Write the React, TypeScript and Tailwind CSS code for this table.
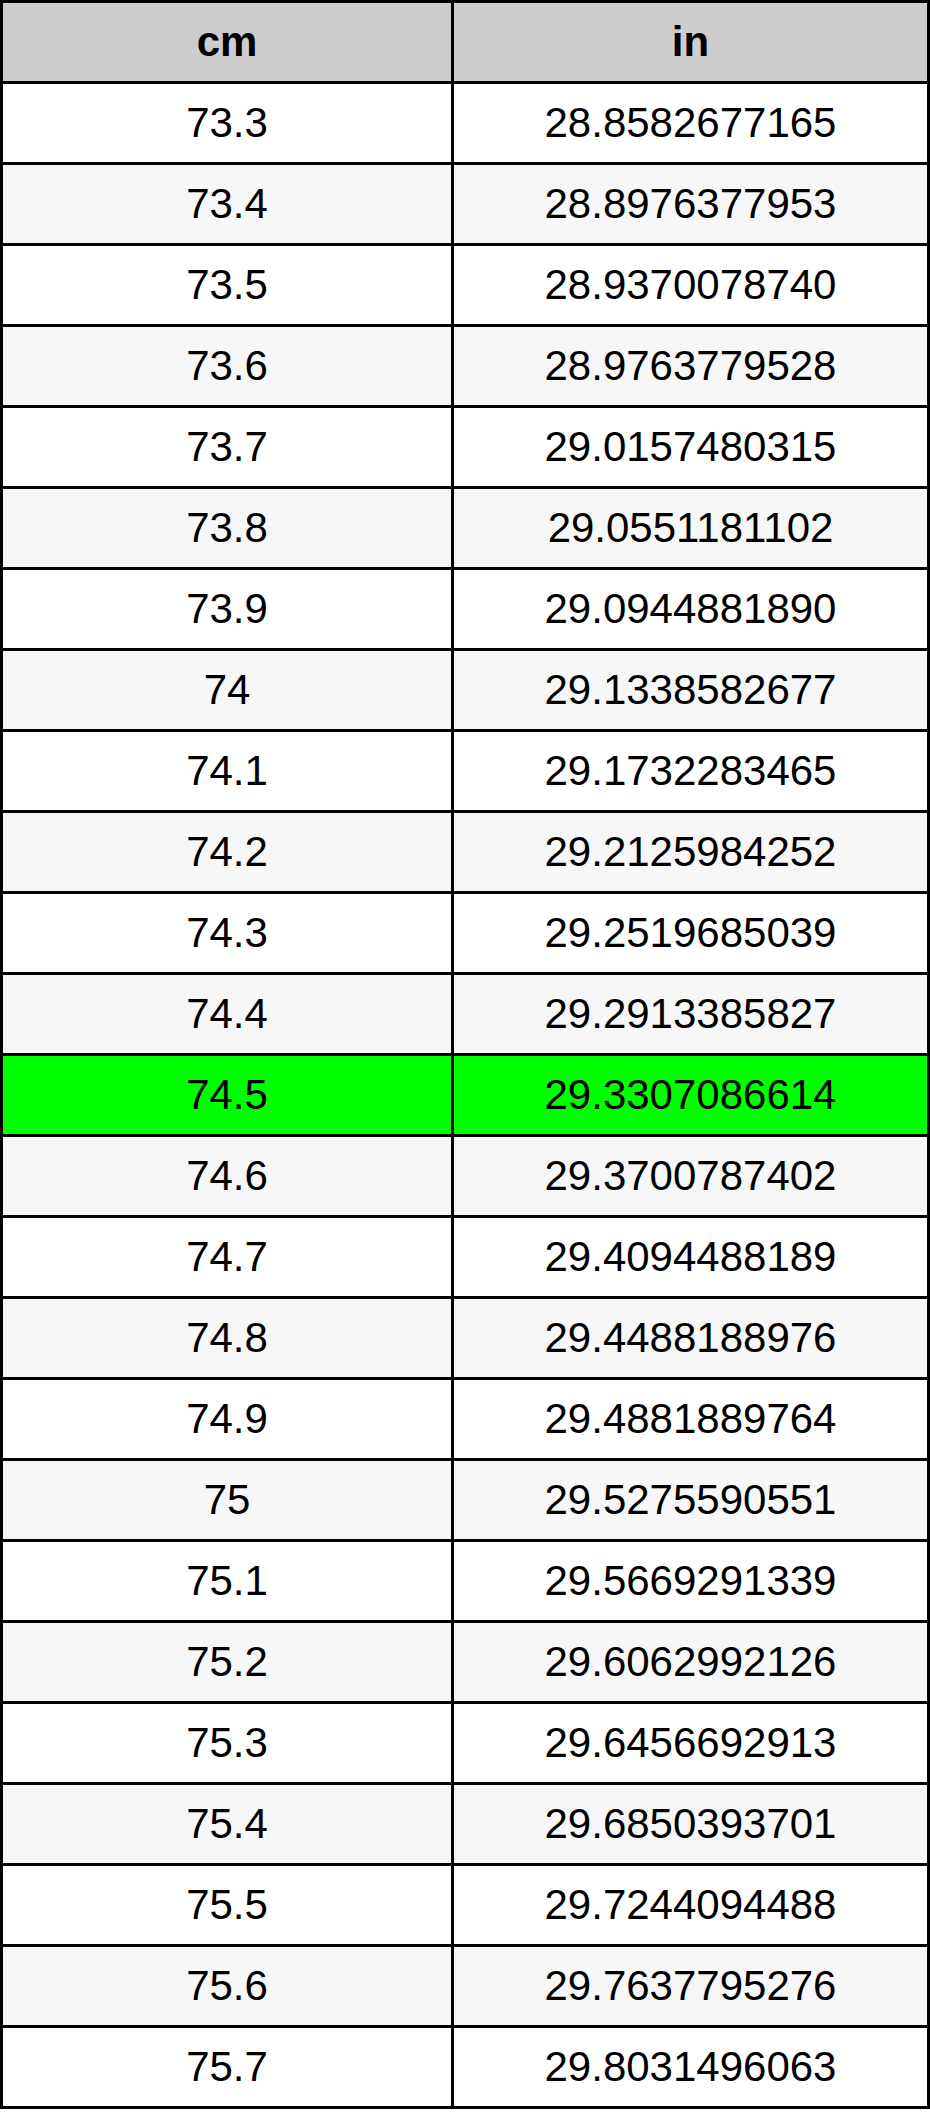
const rows: [string, string][] = [
  ["73.3", "28.8582677165"],
  ["73.4", "28.8976377953"],
  ["73.5", "28.9370078740"],
  ["73.6", "28.9763779528"],
  ["73.7", "29.0157480315"],
  ["73.8", "29.0551181102"],
  ["73.9", "29.0944881890"],
  ["74", "29.1338582677"],
  ["74.1", "29.1732283465"],
  ["74.2", "29.2125984252"],
  ["74.3", "29.2519685039"],
  ["74.4", "29.2913385827"],
  ["74.5", "29.3307086614"],
  ["74.6", "29.3700787402"],
  ["74.7", "29.4094488189"],
  ["74.8", "29.4488188976"],
  ["74.9", "29.4881889764"],
  ["75", "29.5275590551"],
  ["75.1", "29.5669291339"],
  ["75.2", "29.6062992126"],
  ["75.3", "29.6456692913"],
  ["75.4", "29.6850393701"],
  ["75.5", "29.7244094488"],
  ["75.6", "29.7637795276"],
  ["75.7", "29.8031496063"],
]

const highlighted = "74.5"

export default function App() {
  return (
    <div className="bg-white min-h-[2115px] font-['Liberation_Sans',Arial,sans-serif] text-black">
      <div className="grid w-[930px] grid-cols-[448px_473px] gap-[3px] bg-black p-[3px] text-[42px] leading-none">
        <div className="flex h-[78px] items-center justify-center bg-[#cdcdcd] font-bold">cm</div>
        <div className="flex h-[78px] items-center justify-center bg-[#cdcdcd] font-bold">in</div>
        {rows.map(([cm, inch], i) => {
          const bg = cm === highlighted ? "bg-[#00ff00]" : i % 2 === 0 ? "bg-white" : "bg-[#f7f7f7]"
          return (
            <div key={cm} className="contents">
              <div className={`flex h-[78px] items-center justify-center ${bg}`}>{cm}</div>
              <div className={`flex h-[78px] items-center justify-center ${bg}`}>{inch}</div>
            </div>
          )
        })}
      </div>
    </div>
  )
}
